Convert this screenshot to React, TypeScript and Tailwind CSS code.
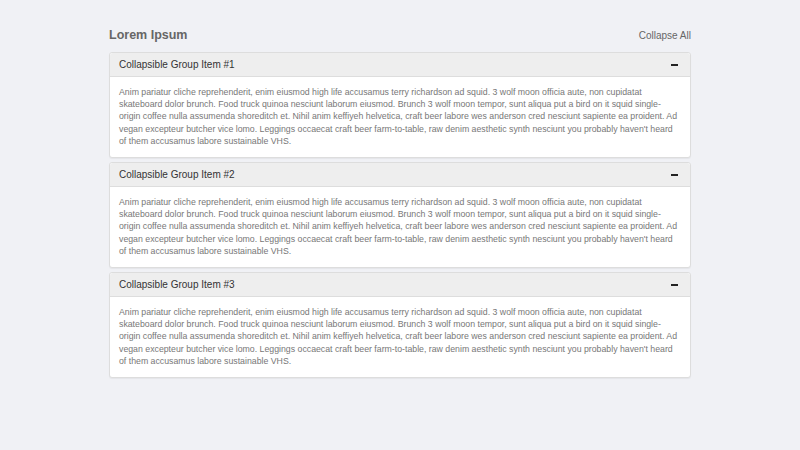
import React from "react";

const body =
  "Anim pariatur cliche reprehenderit, enim eiusmod high life accusamus terry richardson ad squid. 3 wolf moon officia aute, non cupidatat skateboard dolor brunch. Food truck quinoa nesciunt laborum eiusmod. Brunch 3 wolf moon tempor, sunt aliqua put a bird on it squid single-origin coffee nulla assumenda shoreditch et. Nihil anim keffiyeh helvetica, craft beer labore wes anderson cred nesciunt sapiente ea proident. Ad vegan excepteur butcher vice lomo. Leggings occaecat craft beer farm-to-table, raw denim aesthetic synth nesciunt you probably haven't heard of them accusamus labore sustainable VHS.";

function Panel({ title }: { title: string }) {
  return (
    <div className="rounded-[3px] border border-[#dddddd] bg-white shadow-[0_1px_1px_rgba(0,0,0,0.05)]">
      <div className="flex h-[24px] items-center justify-between rounded-t-[3px] border-b border-[#dddddd] bg-[#eeeeee] pl-[9px] pr-[12px]">
        <span className="text-[10px] text-[#333333]">{title}</span>
        <span className="block h-[2px] w-[7px] bg-[#222222]" />
      </div>
      <div className="px-[9px] pt-[9px] pb-[9.5px] text-[8.75px] leading-[12.2px] text-[#777777]">
        {body}
      </div>
    </div>
  );
}

export default function App() {
  return (
    <div
      className="min-h-[450px] w-full bg-[#f0f1f5]"
      style={{ fontFamily: '"Liberation Sans", Arial, sans-serif' }}
    >
      <div className="mx-auto w-[582px] pt-[25px]">
        <div className="mb-[7px] flex h-[20px] items-center justify-between">
          <h1 className="text-[12.5px] font-bold text-[#666666]">Lorem Ipsum</h1>
          <span className="text-[10px] text-[#666666]">Collapse All</span>
        </div>
        <div className="flex flex-col gap-[4.5px]">
          <Panel title="Collapsible Group Item #1" />
          <Panel title="Collapsible Group Item #2" />
          <Panel title="Collapsible Group Item #3" />
        </div>
      </div>
    </div>
  );
}
